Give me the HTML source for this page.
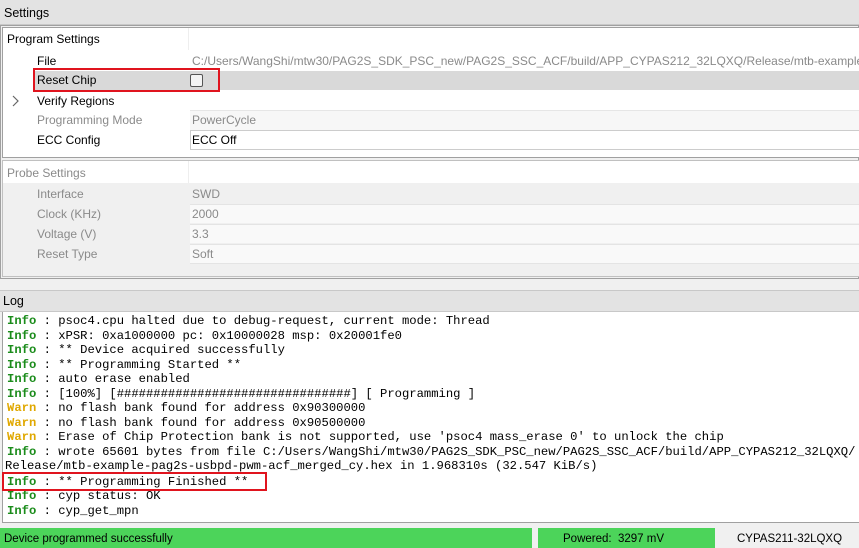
<!DOCTYPE html>
<html><head><meta charset="utf-8"><style>
*{margin:0;padding:0;box-sizing:border-box}
html,body{width:859px;height:548px;overflow:hidden}
body{background:#f0f0f0;font-family:"Liberation Sans",sans-serif;font-size:12px;color:#000;position:relative}
.a{position:absolute;white-space:nowrap}
.hdr{background:#e3e3e3;border-bottom:1px solid #c8c8c8}
.box{background:#fff;border:1px solid #a0a0a0}
.lbl{left:37px}
.val{left:192px}
.g{color:#8a8a8a}
.log{font-family:"Liberation Mono",monospace;font-size:12.2px;left:7px;width:850px;overflow:hidden}
.i{color:#1b8c1b;font-weight:bold}
.w{color:#e0a800;font-weight:bold}
</style></head><body>
<div class="a hdr" style="left:0;top:0;width:859px;height:25px"></div>
<div class="a" style="left:4px;top:6px;font-size:12.5px">Settings</div>
<div class="a" style="left:0;top:25px;width:859px;height:254px;border:1px solid #a0a0a0;background:#f0f0f0"></div>
<div class="a box" style="left:2px;top:27px;width:857px;height:131px;border-right:none"></div>
<div class="a" style="left:188px;top:28px;width:1px;height:22px;background:#eee"></div>
<div class="a" style="left:7px;top:32px">Program Settings</div>
<div class="a lbl" style="top:54px">File</div>
<div class="a val g" style="top:54px;width:667px;overflow:hidden">C:/Users/WangShi/mtw30/PAG2S_SDK_PSC_new/PAG2S_SSC_ACF/build/APP_CYPAS212_32LQXQ/Release/mtb-example-pag2s-usbpd</div>
<div class="a" style="left:33px;top:71px;width:826px;height:19px;background:#d9d9d9"></div>
<div class="a lbl" style="top:73px">Reset Chip</div>
<div class="a" style="left:190px;top:74px;width:13px;height:13px;border:1px solid #555;border-radius:2px;background:#f4f4f4"></div>
<div class="a" style="left:33px;top:68px;width:187px;height:24px;border:2px solid #e0141e"></div>
<svg class="a" style="left:12px;top:95px" width="8" height="12"><path d="M1 1 L6 6 L1 11" fill="none" stroke="#666" stroke-width="1.2"/></svg>
<div class="a lbl" style="top:94px">Verify Regions</div>
<div class="a" style="left:190px;top:110px;width:669px;height:20px;background:#f7f7f7;border-top:1px solid #e6e6e6"></div>
<div class="a lbl g" style="top:113px">Programming Mode</div>
<div class="a val g" style="top:113px">PowerCycle</div>
<div class="a" style="left:190px;top:130px;width:669px;height:20px;background:#fff;border:1px solid #ccc;border-right:none"></div>
<div class="a lbl" style="top:133px">ECC Config</div>
<div class="a val" style="top:133px">ECC Off</div>
<div class="a" style="left:2px;top:160px;width:857px;height:117px;border:1px solid #c0c0c0;border-right:none;background:#f0f0f0"></div>
<div class="a" style="left:3px;top:161px;width:856px;height:22px;background:#fff"></div>
<div class="a" style="left:188px;top:161px;width:1px;height:22px;background:#eee"></div>
<div class="a g" style="left:7px;top:166px">Probe Settings</div>
<div class="a" style="left:190px;top:204px;width:669px;height:19px;background:#f9f9f9;border-top:1px solid #e4e4e4"></div>
<div class="a" style="left:190px;top:224px;width:669px;height:19px;background:#f9f9f9;border-top:1px solid #e4e4e4"></div>
<div class="a" style="left:190px;top:244px;width:669px;height:20px;background:#f9f9f9;border-top:1px solid #e4e4e4;border-bottom:1px solid #e4e4e4"></div>
<div class="a lbl g" style="top:187px">Interface</div><div class="a val g" style="top:187px">SWD</div>
<div class="a lbl g" style="top:207px">Clock (KHz)</div><div class="a val g" style="top:207px">2000</div>
<div class="a lbl g" style="top:227px">Voltage (V)</div><div class="a val g" style="top:227px">3.3</div>
<div class="a lbl g" style="top:247px">Reset Type</div><div class="a val g" style="top:247px">Soft</div>
<div class="a hdr" style="left:0;top:290px;width:859px;height:22px;border-top:1px solid #c8c8c8"></div>
<div class="a" style="left:3px;top:294px;font-size:12.5px">Log</div>
<div class="a" style="left:2px;top:312px;width:857px;height:211px;background:#fff;border-left:1px solid #a0a0a0;border-bottom:1px solid #a0a0a0"></div>
<div class="a log" style="top:314px"><span class="i">Info</span> : psoc4.cpu halted due to debug-request, current mode: Thread</div>
<div class="a log" style="top:328.5px"><span class="i">Info</span> : xPSR: 0xa1000000 pc: 0x10000028 msp: 0x20001fe0</div>
<div class="a log" style="top:343px"><span class="i">Info</span> : ** Device acquired successfully</div>
<div class="a log" style="top:357.5px"><span class="i">Info</span> : ** Programming Started **</div>
<div class="a log" style="top:372px"><span class="i">Info</span> : auto erase enabled</div>
<div class="a log" style="top:386.5px"><span class="i">Info</span> : [100%] [################################] [ Programming ]</div>
<div class="a log" style="top:401px"><span class="w">Warn</span> : no flash bank found for address 0x90300000</div>
<div class="a log" style="top:415.5px"><span class="w">Warn</span> : no flash bank found for address 0x90500000</div>
<div class="a log" style="top:430px"><span class="w">Warn</span> : Erase of Chip Protection bank is not supported, use 'psoc4 mass_erase 0' to unlock the chip</div>
<div class="a log" style="top:444.5px"><span class="i">Info</span> : wrote 65601 bytes from file C:/Users/WangShi/mtw30/PAG2S_SDK_PSC_new/PAG2S_SSC_ACF/build/APP_CYPAS212_32LQXQ/</div>
<div class="a log" style="top:459px;left:5px">Release/mtb-example-pag2s-usbpd-pwm-acf_merged_cy.hex in 1.968310s (32.547 KiB/s)</div>
<div class="a log" style="top:474.5px"><span class="i">Info</span> : ** Programming Finished **</div>
<div class="a log" style="top:489px"><span class="i">Info</span> : cyp status: OK</div>
<div class="a log" style="top:503.5px"><span class="i">Info</span> : cyp_get_mpn</div>
<div class="a" style="left:2px;top:472px;width:265px;height:19px;border:2px solid #e0141e"></div>
<div class="a" style="left:0;top:528px;width:532px;height:20px;background:#4cd45a"></div>
<div class="a" style="left:4px;top:533px;font-size:11.5px">Device programmed successfully</div>
<div class="a" style="left:538px;top:528px;width:177px;height:20px;background:#4cd45a"></div>
<div class="a" style="left:563px;top:533px;font-size:11.5px">Powered:&nbsp; 3297 mV</div>
<div class="a" style="left:737px;top:533px;font-size:11.5px">CYPAS211-32LQXQ</div>
</body></html>
